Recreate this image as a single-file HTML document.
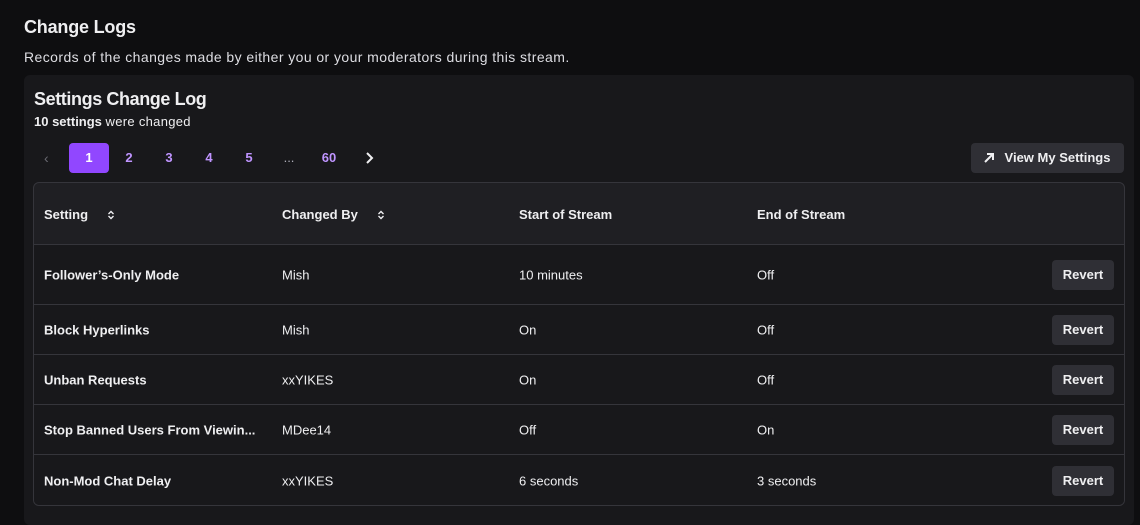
<!DOCTYPE html>
<html><head><style>
*{box-sizing:border-box;margin:0;padding:0}
body{width:1140px;height:517px;background:#0e0e10;color:#efeff1;font-family:"Liberation Sans",sans-serif;overflow:hidden;position:relative}
.a{position:absolute}
h1{position:absolute;left:24px;top:17px;font-size:18px;font-weight:700;letter-spacing:-0.2px}
.sub{left:24px;top:49px;font-size:14px;color:#dedee3;letter-spacing:0.42px}
.card{left:24px;top:75px;width:1110px;height:450px;background:#18181b;border-radius:6px}
.card h2{position:absolute;left:10px;top:14px;font-size:18px;font-weight:700;letter-spacing:-0.4px}
.cnt{left:10px;top:39px;font-size:13px}
.cnt i{font-style:normal;letter-spacing:0.3px}
.pg{top:143px;height:30px;width:40px;text-align:center;line-height:30px;font-size:13px;font-weight:700;color:#bf94ff}
.btn{background:#2f2f35;border-radius:4px;font-size:13px;font-weight:700;color:#efeff1;text-align:center}
.tbl{left:33px;top:182px;width:1092px;height:324px;border:1px solid #35353b;border-radius:6px;background:#1f1f23;overflow:hidden}
.hd{position:absolute;top:24px;font-size:13px;font-weight:700;color:#efeff1}
.hd svg{vertical-align:-1px;margin-left:19px}
.row{position:absolute;left:0;width:100%;border-top:1px solid #35353b;background:#18181b;font-size:13px}
.row span{position:absolute;top:50%;transform:translateY(-50%)}
.row .b{font-weight:700}
.rv{position:absolute;right:10px;top:50%;transform:translateY(-50%);width:62px;height:30px;line-height:30px}
</style></head><body>
<h1>Change Logs</h1>
<div class="a sub">Records of the changes made by either you or your moderators during this stream.</div>
<div class="a card">
<h2>Settings Change Log</h2>
<div class="a cnt"><b>10 settings</b> <i>were changed</i></div>
</div>
<div class="a" style="left:44px;top:150px;color:#6b6b73;font-size:14px">‹</div>
<div class="a pg" style="left:69px;background:#9147ff;color:#fff;border-radius:4px">1</div>
<div class="a pg" style="left:109px">2</div>
<div class="a pg" style="left:149px">3</div>
<div class="a pg" style="left:189px">4</div>
<div class="a pg" style="left:229px">5</div>
<div class="a pg" style="left:269px;color:#adadb8;font-weight:400">...</div>
<div class="a pg" style="left:309px">60</div>
<svg class="a" style="left:363px;top:151px" width="12" height="14" viewBox="0 0 12 14"><path d="M4 2l5 5-5 5" stroke="#efeff1" stroke-width="2" fill="none"/></svg>
<div class="a btn" style="left:971px;top:143px;width:153px;height:30px;line-height:30px;padding-left:20px">View My Settings</div>
<svg class="a" style="left:983px;top:152px" width="12" height="12" viewBox="0 0 12 12"><path d="M2 10L10 2M4 2h6v6" stroke="#efeff1" stroke-width="2" fill="none"/></svg>
<div class="a tbl">
<div class="hd" style="left:10px">Setting<svg width="8" height="10" viewBox="0 0 8 10"><path d="M1.5 4L4 1.5 6.5 4M1.5 6L4 8.5 6.5 6" stroke="#efeff1" stroke-width="1.4" fill="none"/></svg></div>
<div class="hd" style="left:248px">Changed By<svg width="8" height="10" viewBox="0 0 8 10"><path d="M1.5 4L4 1.5 6.5 4M1.5 6L4 8.5 6.5 6" stroke="#efeff1" stroke-width="1.4" fill="none"/></svg></div>
<div class="hd" style="left:485px">Start of Stream</div>
<div class="hd" style="left:723px">End of Stream</div>
<div class="row" style="top:61px;height:60px"><span class="b" style="left:10px">Follower’s-Only Mode</span><span style="left:248px">Mish</span><span style="left:485px">10 minutes</span><span style="left:723px">Off</span><div class="btn rv">Revert</div></div>
<div class="row" style="top:121px;height:50px"><span class="b" style="left:10px">Block Hyperlinks</span><span style="left:248px">Mish</span><span style="left:485px">On</span><span style="left:723px">Off</span><div class="btn rv">Revert</div></div>
<div class="row" style="top:171px;height:50px"><span class="b" style="left:10px">Unban Requests</span><span style="left:248px">xxYIKES</span><span style="left:485px">On</span><span style="left:723px">Off</span><div class="btn rv">Revert</div></div>
<div class="row" style="top:221px;height:50px"><span class="b" style="left:10px">Stop Banned Users From Viewin...</span><span style="left:248px">MDee14</span><span style="left:485px">Off</span><span style="left:723px">On</span><div class="btn rv">Revert</div></div>
<div class="row" style="top:271px;height:52px"><span class="b" style="left:10px">Non-Mod Chat Delay</span><span style="left:248px">xxYIKES</span><span style="left:485px">6 seconds</span><span style="left:723px">3 seconds</span><div class="btn rv">Revert</div></div>
</div>
</body></html>
